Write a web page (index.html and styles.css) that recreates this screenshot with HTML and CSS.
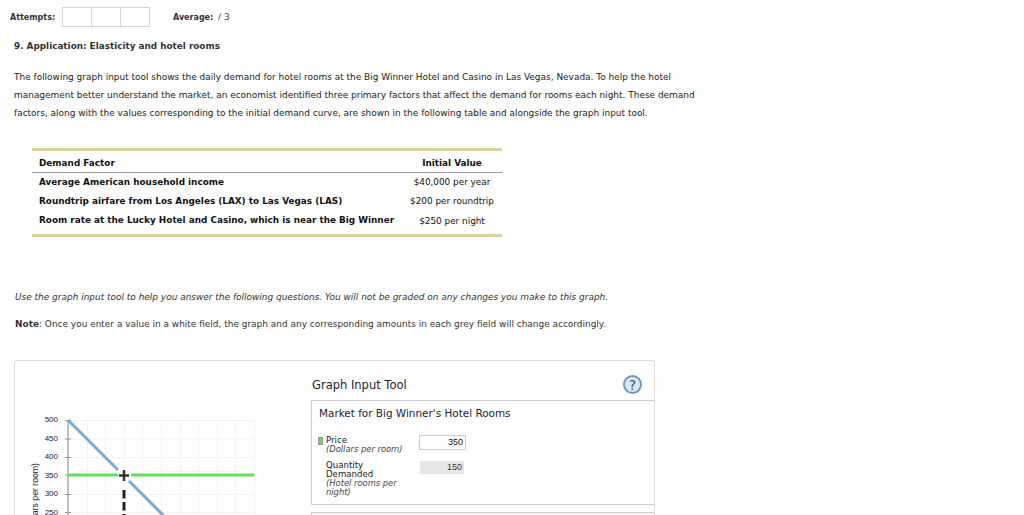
FILE: index.html
```html
<!DOCTYPE html>
<html lang="en">
<head>
  <meta charset="UTF-8">
  <title>Elasticity and hotel rooms</title>
  <link rel="stylesheet" href="styles.css">
</head>
<body>

  <div class="attempts">
    <b class="attempts-label">Attempts:</b>
    <div class="boxes"><span></span><span></span><span></span></div>
    <b class="average-label">Average:</b>
    <span class="average-value">/ 3</span>
  </div>

  <div class="content">
    <h2>9. Application: Elasticity and hotel rooms</h2>

    <p class="intro">The following graph input tool shows the daily demand for hotel rooms at the Big Winner Hotel and Casino in Las Vegas, Nevada. To help the hotel management better understand the market, an economist identified three primary factors that affect the demand for rooms each night. These demand factors, along with the values corresponding to the initial demand curve, are shown in the following table and alongside the graph input tool.</p>

    <table class="factors">
      <thead>
        <tr><th>Demand Factor</th><th class="val">Initial Value</th></tr>
      </thead>
      <tbody>
        <tr class="row-first"><th>Average American household income</th><td>$40,000 per year</td></tr>
        <tr class="row-mid"><th>Roundtrip airfare from Los Angeles (LAX) to Las Vegas (LAS)</th><td>$200 per roundtrip</td></tr>
        <tr class="row-last"><th>Room rate at the Lucky Hotel and Casino, which is near the Big Winner</th><td>$250 per night</td></tr>
      </tbody>
    </table>

    <p class="hint"><i>Use the graph input tool to help you answer the following questions. You will not be graded on any changes you make to this graph.</i></p>
    <p class="note"><b>Note</b>: Once you enter a value in a white field, the graph and any corresponding amounts in each grey field will change accordingly.</p>

    <div class="tool">
      <div class="graph">
        <svg width="296" height="141" viewBox="0 0 296 141">
          <g class="grid">
            <path d="M53 46.500H239M53 65H239M53 83.500H239M53 101H239M53 120.500H239M53 138.500H239"/>
            <path d="M72.500 46V141M90.500 46V141M109.500 46V141M127.500 46V141M146.500 46V141M165.500 46V141M183.500 46V141M202.500 46V141M220.500 46V141M239.500 46V141"/>
          </g>
          <path class="axis" d="M53 46V141"/>
          <path class="axis tickmarks" d="M50 46.500H56M50 65H56M50 83.500H56M50 101H56M50 120.500H56M50 138.500H56"/>
          <g class="ticks">
            <text x="43" y="48">500</text>
            <text x="43" y="67">450</text>
            <text x="43" y="85">400</text>
            <text x="43" y="104">350</text>
            <text x="43" y="122">300</text>
            <text x="43" y="141">250</text>
          </g>
          <text class="ylabel" transform="translate(23 89) rotate(-90)">Price (Dollars per room)</text>
          <path class="demand" d="M53 46L103 96M114 107L150 143"/>
          <path class="price" d="M53 101H103M116 101H239"/>
          <path class="drop" d="M109 116V141"/>
          <path class="cross" d="M104 101.500H114M109 96V107"/>
        </svg>
      </div>
      <div class="panel">
        <div class="panel-head">
          <h3>Graph Input Tool</h3>
          <span class="help">?</span>
        </div>
        <div class="market">
          <h4>Market for Big Winner's Hotel Rooms</h4>
          <div class="field">
            <span class="swatch"></span>
            <div class="label">Price<i>(Dollars per room)</i></div>
            <div class="input">350</div>
          </div>
          <div class="field">
            <span class="swatch none"></span>
            <div class="label">Quantity Demanded<i>(Hotel rooms per night)</i></div>
            <div class="input grey">150</div>
          </div>
        </div>
        <div class="next"></div>
      </div>
    </div>
  </div>

</body>
</html>
```

FILE: styles.css
```css
html, body {
  height: 515px;
  overflow: hidden;
}

body {
  margin: 0;
  background: #fff;
  color: #333;
  font-family: "DejaVu Sans", Verdana, sans-serif;
  font-size: 8.96px;
}

.attempts {
  display: flex;
  align-items: center;
  height: 20px;
  margin-top: 7px;
  padding-left: 10px;
  font-size: 8px;
  color: #333;
}

.attempts-label {
  width: 52px;
}

.boxes {
  display: flex;
  border: 1px solid #d4d4d4;
  height: 18px;
}

.boxes span {
  width: 28px;
  border-right: 1px solid #d4d4d4;
}

.boxes span:last-child {
  border-right: none;
}

.average-label {
  margin-left: 23px;
  width: 45px;
}

.average-value {
  font-size: 9px;
  color: #444;
}

.content {
  padding-left: 14px;
}

h2 {
  margin: 12px 0 0;
  font-size: 8.85px;
  line-height: 14px;
  color: #333;
}

.intro {
  width: 690px;
  margin: 15px 0 0;
  line-height: 18px;
  color: #222;
}

.factors {
  width: 470px;
  margin: 26px 0 0 18px;
  border-collapse: collapse;
  border-top: 3px solid #dcd09c;
  border-bottom: 3px solid #dcd09c;
  font-size: 8.87px;
  color: #111;
}

.factors th, .factors td {
  box-sizing: border-box;
  white-space: nowrap;
}

.factors th {
  text-align: left;
  padding: 0 0 0 7px;
}

.factors thead th {
  height: 23px;
  padding-top: 3px;
  border-bottom: 1px solid #999;
}

.row-first th, .row-first td {
  height: 18px;
}

.row-mid th, .row-mid td {
  height: 20px;
}

.row-last th, .row-last td {
  height: 25px;
  padding-bottom: 4px;
}

.factors .val, .factors td {
  width: 93px;
  padding-left: 0;
  padding-right: 7px;
  text-align: center;
}

.hint {
  margin: 53px 0 0 1px;
  line-height: 14px;
}

.note {
  margin: 13px 0 0 1px;
  line-height: 14px;
}

.tool {
  display: flex;
  width: 641px;
  height: 155px;
  margin-top: 29px;
  box-sizing: border-box;
  border: 1px solid #ddd;
  border-bottom: none;
  border-radius: 3px 3px 0 0;
  overflow: hidden;
}

.graph {
  width: 296px;
  padding-top: 13px;
}

.graph svg {
  display: block;
}

.grid path {
  fill: none;
  stroke: #f3f3f3;
  stroke-width: 1;
}

.axis {
  fill: none;
  stroke: #aaa;
  stroke-width: 1.5;
}

.tickmarks {
  stroke-width: 1;
  stroke: #999;
}

.ticks text {
  font-family: "Liberation Sans", Arial, sans-serif;
  font-size: 8px;
  text-anchor: end;
  fill: #222;
}

.ylabel {
  font-family: "Liberation Sans", Arial, sans-serif;
  font-size: 8.7px;
  text-anchor: end;
  fill: #222;
}

.demand {
  fill: none;
  stroke: #7fa9d6;
  stroke-width: 3;
}

.price {
  fill: none;
  stroke: #66dd58;
  stroke-width: 3;
}

.drop {
  fill: none;
  stroke: #222;
  stroke-width: 3;
  stroke-dasharray: 8.500 3.500;
}

.cross {
  fill: none;
  stroke: #333;
  stroke-width: 2.500;
}

.panel {
  flex: 1;
  min-width: 0;
}

.panel-head {
  display: flex;
  align-items: center;
  justify-content: space-between;
  height: 39px;
  box-sizing: border-box;
  padding: 8px 12px 0 1px;
}

h3 {
  margin: 0;
  font-size: 11.500px;
  font-weight: normal;
  color: #223;
}

.help {
  display: flex;
  align-items: center;
  justify-content: center;
  width: 19px;
  height: 19px;
  box-sizing: border-box;
  border: 2px solid #6f9cc0;
  border-radius: 50%;
  background: #dde8f2;
  color: #2a5a85;
  font-size: 14px;
}

.market {
  height: 105px;
  border: 1px solid #ccc;
  border-right: none;
  padding: 6px 0 0 6px;
  box-sizing: border-box;
}

h4 {
  margin: 0 0 15px 1px;
  font-size: 10.450px;
  line-height: 13px;
  font-weight: normal;
  color: #223;
}

.field {
  display: grid;
  grid-template-columns: 8px 93px 46px;
  align-items: start;
  margin-bottom: 6px;
  font-size: 8.600px;
  line-height: 9px;
  color: #222;
}

.swatch {
  width: 3px;
  height: 6px;
  margin-top: 2px;
  background: #66dd58;
  border: 1px solid #999;
}

.swatch.none {
  visibility: hidden;
}

.label {
  margin-top: 1px;
  padding-right: 15px;
}

.label i {
  display: block;
  font-size: 8.350px;
  color: #444;
}

.input {
  width: 43px;
  height: 13px;
  border: 1px solid #ccc;
  padding-right: 2px;
  text-align: right;
  line-height: 13px;
  font-family: "Liberation Sans", Arial, sans-serif;
  font-size: 9px;
  color: #111;
}

.input.grey {
  margin-top: 1px;
  margin-left: 1px;
  width: 42px;
  border: none;
  background: #e6e6e6;
  color: #333;
}

.next {
  height: 20px;
  margin-top: 7px;
  border: 1px solid #ccc;
  border-right: none;
}
```
